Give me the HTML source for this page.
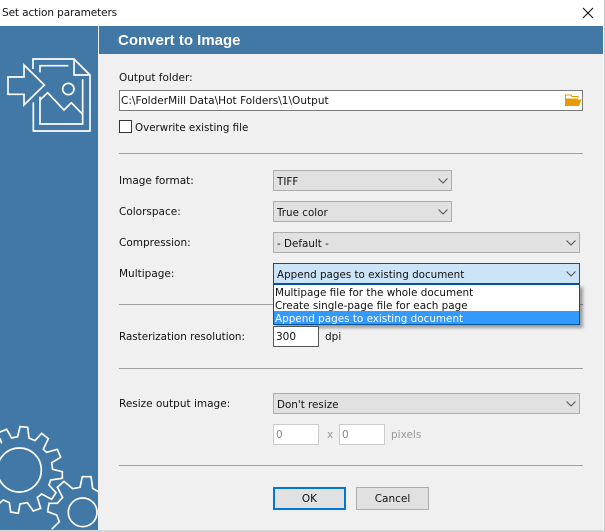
<!DOCTYPE html>
<html><head><meta charset="utf-8">
<style>
html,body{margin:0;padding:0;width:605px;height:532px;overflow:hidden;background:#fff}
body{position:relative;font-family:"DejaVu Sans","Liberation Sans",sans-serif;font-size:10.5px;color:#111}
div{position:absolute;box-sizing:border-box;white-space:nowrap}
.t{line-height:14px;height:14px}
.sel{background:#e1e1e1;border:1px solid #adadad;height:21px;line-height:22px;padding-left:3px;font-size:10.35px}
.inp{background:#fff;border:1px solid #7a7a7a;height:21px;line-height:21px;padding-left:3px}
.hr{height:1px;background:#a0a0a0}
.btn{background:#e1e1e1;border:1px solid #adadad;text-align:center;height:23px;line-height:23px}
.it{height:13px;line-height:16px;left:274px;width:305px;padding-left:1px;font-size:10.4px}
svg{position:absolute;overflow:visible}
</style></head>
<body>
<div style="left:0;top:0;width:605px;height:532px;background:#fff"></div>
<div style="left:0;top:26px;width:603px;height:504px;background:#f0f0f0"></div>
<div style="left:604px;top:0;width:1px;height:532px;background:#c8c8c8"></div>
<div style="left:0;top:530px;width:605px;height:2px;background:#d4d4d4"></div>
<div class="t" style="left:2px;top:6px;font-size:10.5px;letter-spacing:-.1px">Set action parameters</div>
<svg style="left:583px;top:8px" width="10" height="10" viewBox="0 0 10 10"><path d="M0 0L10 10M10 0L0 10" stroke="#111" stroke-width="1.1" fill="none"/></svg>

<div style="left:0;top:26px;width:98px;height:504px;background:#4178a6"></div>
<div style="left:99px;top:26px;width:504px;height:28px;background:#4178a6"></div>
<div style="left:118px;top:32px;height:18px;color:#fff;font:bold 15px/18px 'Liberation Sans',sans-serif">Convert to Image</div>

<svg style="left:0;top:0" width="98" height="530" viewBox="0 0 98 530">
<defs><clipPath id="c"><rect x="0" y="26" width="98" height="504"/></clipPath></defs>
<g clip-path="url(#c)" fill="none" stroke="#fff">
<g transform="translate(0,55) scale(.3333)" stroke-width="5">
<path d="M72 30L133 90L72 150V118H24V66H72Z" stroke-linejoin="miter"/>
<path d="M100 142V228H270V60L222 12H99V42"/>
<path d="M222 12V60H270"/>
<path d="M120 52V32H205"/>
<path d="M248 72V207H120V125"/>
<path d="M120 135L143 113L192 165L214 143L248 178"/>
<circle cx="205" cy="102" r="17"/>
</g>
<g transform="translate(0,410) scale(.3333)" stroke-width="5">
<circle cx="58" cy="180" r="66"/>
<circle cx="248" cy="307" r="43"/>
<path d="M-10 70L20 58L35 84L53 80L60 50L83 52L87 84L105 92L125 70L145 86L130 118L140 127L172 118L182 142L155 158L158 178L187 185L187 205L152 210L147 225L168 248L155 268L125 252L112 262L122 295L100 303L82 278L60 282L55 310L32 306L28 278L10 270L-8 285"/>
<path d="M155 358L178 335L170 315L143 305L147 280L172 280L188 262L172 232L192 214L218 236L240 232L247 200L273 200L278 235L298 247"/>
<path d="M5 100L0 85"/>
</g>
</g>
</svg>

<div class="t" style="left:119px;top:71px;line-height:15px">Output folder:</div>
<div class="inp" style="left:119px;top:90px;width:464px;padding-left:1px;letter-spacing:.03px">C:\FolderMill Data\Hot Folders\1\Output</div>
<svg style="left:565px;top:94px" width="17" height="12" viewBox="0 0 17 12">
<path d="M.5 11V1H6L7 2.500H13V4" fill="none" stroke="#e69c00" stroke-width="1"/>
<path d="M0 12V5.500H16.500L14 12Z" fill="#e69c00"/>
<path d="M1 4.500H13V5.500H1Z" fill="#e69c00"/>
</svg>
<div style="left:119px;top:120px;width:13px;height:13px;background:#fff;border:1px solid #333"></div>
<div class="t" style="left:135px;top:121px;font-size:10.3px">Overwrite existing file</div>
<div class="hr" style="left:119px;top:153px;width:464px"></div>

<div class="t" style="left:119px;top:174px">Image format:</div>
<div class="sel" style="left:273px;top:170px;width:179px">TIFF</div>
<svg style="left:438px;top:178px" width="10" height="6" viewBox="0 0 10 6"><path d="M.5 .5L5 5L9.500 .5" fill="none" stroke="#555" stroke-width="1.100"/></svg>

<div class="t" style="left:119px;top:205px">Colorspace:</div>
<div class="sel" style="left:273px;top:201px;width:179px">True color</div>
<svg style="left:438px;top:209px" width="10" height="6" viewBox="0 0 10 6"><path d="M.5 .5L5 5L9.500 .5" fill="none" stroke="#555" stroke-width="1.100"/></svg>

<div class="t" style="left:119px;top:236px">Compression:</div>
<div class="sel" style="left:273px;top:232px;width:307px">- Default -</div>
<svg style="left:566px;top:240px" width="10" height="6" viewBox="0 0 10 6"><path d="M.5 .5L5 5L9.500 .5" fill="none" stroke="#555" stroke-width="1.100"/></svg>

<div class="t" style="left:119px;top:267px">Multipage:</div>
<div class="sel" style="left:273px;top:263px;width:307px;background:#cce4f7;border-color:#005499">Append pages to existing document</div>
<svg style="left:566px;top:271px" width="10" height="6" viewBox="0 0 10 6"><path d="M.5 .5L5 5L9.500 .5" fill="none" stroke="#555" stroke-width="1.100"/></svg>

<div class="hr" style="left:119px;top:304px;width:464px"></div>
<div style="left:273px;top:284px;width:307px;height:41px;background:#fff;border:1px solid #005499;box-shadow:3px 3px 3px rgba(0,0,0,.35)"></div>
<div class="it" style="top:285px">Multipage file for the whole document</div>
<div class="it" style="top:298px">Create single-page file for each page</div>
<div class="it" style="top:311px;background:#3399ff;color:#fff">Append pages to existing document</div>

<div class="t" style="left:119px;top:330px;font-size:10.35px">Rasterization resolution:</div>
<div class="inp" style="left:273px;top:326px;width:46px;z-index:2;border-color:#555;padding-left:2px">300</div>
<div class="t" style="left:325px;top:330px">dpi</div>
<div class="hr" style="left:119px;top:368px;width:464px"></div>

<div class="t" style="left:119px;top:397px">Resize output image:</div>
<div class="sel" style="left:273px;top:393px;width:307px">Don't resize</div>
<svg style="left:566px;top:401px" width="10" height="6" viewBox="0 0 10 6"><path d="M.5 .5L5 5L9.500 .5" fill="none" stroke="#555" stroke-width="1.100"/></svg>

<div class="inp" style="left:273px;top:424px;width:46px;border-color:#ccc;color:#888;padding-left:2px">0</div>
<div class="t" style="left:327px;top:428px;color:#999">x</div>
<div class="inp" style="left:339px;top:424px;width:46px;border-color:#ccc;color:#888;padding-left:2px">0</div>
<div class="t" style="left:391px;top:428px;color:#999">pixels</div>
<div class="hr" style="left:119px;top:465px;width:464px"></div>

<div class="btn" style="left:273px;top:487px;width:73px;border:2px solid #0078d7;line-height:21px">OK</div>
<div class="btn" style="left:356px;top:487px;width:73px">Cancel</div>
</body></html>
